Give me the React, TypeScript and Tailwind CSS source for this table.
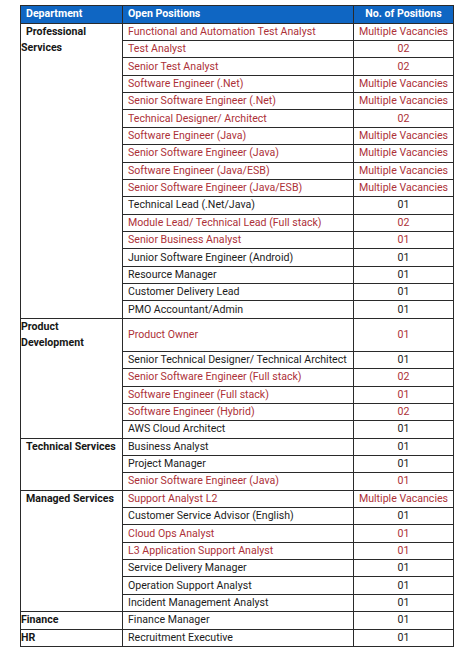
import React from "react";

type Row = { pos: string; num: string; red: boolean; tall?: boolean };
type Group = { dept: string; indent: boolean; rows: Row[] };

const MV = "Multiple Vacancies";

const groups: Group[] = [
  {
    dept: "Professional Services",
    indent: true,
    rows: [
      { pos: "Functional and Automation Test Analyst", num: MV, red: true },
      { pos: "Test Analyst", num: "02", red: true },
      { pos: "Senior Test Analyst", num: "02", red: true },
      { pos: "Software Engineer (.Net)", num: MV, red: true },
      { pos: "Senior Software Engineer (.Net)", num: MV, red: true },
      { pos: "Technical Designer/ Architect", num: "02", red: true },
      { pos: "Software Engineer (Java)", num: MV, red: true },
      { pos: "Senior Software Engineer (Java)", num: MV, red: true },
      { pos: "Software Engineer (Java/ESB)", num: MV, red: true },
      { pos: "Senior Software Engineer (Java/ESB)", num: MV, red: true },
      { pos: "Technical Lead (.Net/Java)", num: "01", red: false },
      { pos: "Module Lead/ Technical Lead (Full stack)", num: "02", red: true },
      { pos: "Senior Business Analyst", num: "01", red: true },
      { pos: "Junior Software Engineer (Android)", num: "01", red: false },
      { pos: "Resource Manager", num: "01", red: false },
      { pos: "Customer Delivery Lead", num: "01", red: false },
      { pos: "PMO Accountant/Admin", num: "01", red: false },
    ],
  },
  {
    dept: "Product Development",
    indent: false,
    rows: [
      { pos: "Product Owner", num: "01", red: true, tall: true },
      { pos: "Senior Technical Designer/ Technical Architect", num: "01", red: false },
      { pos: "Senior Software Engineer (Full stack)", num: "02", red: true },
      { pos: "Software Engineer (Full stack)", num: "01", red: true },
      { pos: "Software Engineer (Hybrid)", num: "02", red: true },
      { pos: "AWS Cloud Architect", num: "01", red: false },
    ],
  },
  {
    dept: "Technical Services",
    indent: true,
    rows: [
      { pos: "Business Analyst", num: "01", red: false },
      { pos: "Project Manager", num: "01", red: false },
      { pos: "Senior Software Engineer (Java)", num: "01", red: true },
    ],
  },
  {
    dept: "Managed Services",
    indent: true,
    rows: [
      { pos: "Support Analyst L2", num: MV, red: true },
      { pos: "Customer Service Advisor (English)", num: "01", red: false },
      { pos: "Cloud Ops Analyst", num: "01", red: true },
      { pos: "L3 Application Support Analyst", num: "01", red: true },
      { pos: "Service Delivery Manager", num: "01", red: false },
      { pos: "Operation Support Analyst", num: "01", red: false },
      { pos: "Incident Management Analyst", num: "01", red: false },
    ],
  },
  {
    dept: "Finance",
    indent: false,
    rows: [{ pos: "Finance Manager", num: "01", red: false }],
  },
  {
    dept: "HR",
    indent: false,
    rows: [{ pos: "Recruitment Executive", num: "01", red: false }],
  },
];

export default function App() {
  return (
    <div
      className="w-[474px] h-[653px] bg-white overflow-hidden pt-[5px] pl-[20px]"
      style={{ fontFamily: "Roboto, 'Liberation Sans', sans-serif" }}
    >
      <table className="border-collapse table-fixed w-[433px] text-[10.6px] leading-[16px]">
        <colgroup>
          <col className="w-[102px]" />
          <col className="w-[231px]" />
          <col className="w-[100px]" />
        </colgroup>
        <thead>
          <tr className="h-[17.7px] bg-[#0f66c3] text-white font-bold">
            <th className="border border-[#2a2a2a] text-left pl-[5px] py-0 align-middle">Department</th>
            <th className="border border-[#2a2a2a] text-left pl-[5px] py-0 align-middle">Open Positions</th>
            <th className="border border-[#2a2a2a] text-center p-0 align-middle">No. of Positions</th>
          </tr>
        </thead>
        <tbody>
          {groups.map((g) =>
            g.rows.map((r, i) => (
              <tr key={g.dept + i} className={r.tall ? "h-[33px]" : "h-[17.37px]"}>
                {i === 0 && (
                  <td
                    rowSpan={g.rows.length}
                    className={
                      "border border-[#2a2a2a] align-top p-0 font-bold text-[#161616] " +
                      (g.indent ? "indent-[5px]" : "indent-0")
                    }
                  >
                    {g.dept}
                  </td>
                )}
                <td
                  className={
                    "border border-[#2a2a2a] align-middle pl-[5px] py-0 whitespace-nowrap " +
                    (r.red ? "text-[#ad3138]" : "text-[#1c1c1c]")
                  }
                >
                  {r.pos}
                </td>
                <td
                  className={
                    "border border-[#2a2a2a] align-middle text-center p-0 whitespace-nowrap " +
                    (r.red ? "text-[#ad3138]" : "text-[#1c1c1c]")
                  }
                >
                  {r.num}
                </td>
              </tr>
            ))
          )}
        </tbody>
      </table>
    </div>
  );
}
